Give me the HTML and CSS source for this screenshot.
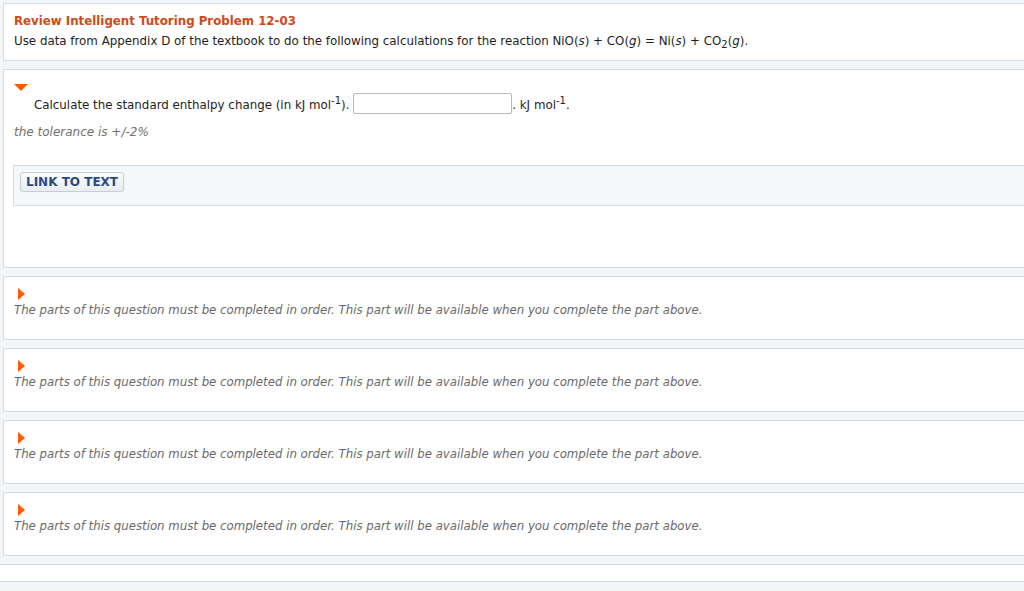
FILE: index.html
```html
<!DOCTYPE html>
<html>
<head>
<meta charset="utf-8">
<link rel="stylesheet" href="styles.css">
</head>
<body>
<div class="page">
  <div class="panel intro">
    <div class="title">Review Intelligent Tutoring Problem 12-03</div>
    <div class="lead">Use data from Appendix D of the textbook to do the following calculations for the reaction <span class="chem">NiO(<i>s</i>) + CO(<i>g</i>) = Ni(<i>s</i>) + CO<sub>2</sub>(<i>g</i>)</span>.</div>
  </div>

  <div class="panel part open">
    <div class="tri-down"></div>
    <div class="question">Calculate the standard enthalpy change (in kJ mol<sup>-1</sup>). <input class="answer" type="text"><span class="unit">. kJ mol<sup>-1</sup>.</span></div>
    <div class="tolerance">the tolerance is +/-2%</div>
    <div class="linkbox"><button class="linkbtn">LINK TO TEXT</button></div>
  </div>

  <div class="panel part closed">
    <div class="tri-right"></div>
    <div class="locked">The parts of this question must be completed in order. This part will be available when you complete the part above.</div>
  </div>
  <div class="panel part closed">
    <div class="tri-right"></div>
    <div class="locked">The parts of this question must be completed in order. This part will be available when you complete the part above.</div>
  </div>
  <div class="panel part closed">
    <div class="tri-right"></div>
    <div class="locked">The parts of this question must be completed in order. This part will be available when you complete the part above.</div>
  </div>
  <div class="panel part closed">
    <div class="tri-right"></div>
    <div class="locked">The parts of this question must be completed in order. This part will be available when you complete the part above.</div>
  </div>
</div>
<div class="footer"></div>
</body>
</html>
```

FILE: styles.css
```css
html, body {
  margin: 0;
  padding: 0;
  background: #f3f6f9;
  font-family: "DejaVu Sans", Verdana, sans-serif;
  font-size: 11.85px;
  color: #1e1e1e;
}
.page {
  padding: 3px 0 0 3px;
}
.panel {
  background: #fff;
  border: 1px solid #d3dae2;
  border-right: 0;
  margin-bottom: 8px;
  padding-left: 10px;
}
.intro {
  box-sizing: border-box;
  height: 58px;
  padding-top: 8px;
}
.title {
  color: #d04a18;
  font-weight: bold;
  font-size: 11.8px;
  line-height: 18px;
}
.lead {
  line-height: 22px;
}
sub, sup {
  font-size: 10px;
  line-height: 0;
}
sub { vertical-align: -3px; }
sup { vertical-align: 5px; }
.open {
  box-sizing: border-box;
  height: 199px;
  padding-top: 14px;
}
.tri-down {
  width: 0;
  height: 0;
  border-left: 7px solid transparent;
  border-right: 7px solid transparent;
  border-top: 7px solid #ff5a00;
}
.question {
  margin-top: 2px;
  padding-left: 20px;
  line-height: 24px;
  height: 24px;
}
.answer {
  box-sizing: border-box;
  width: 159px;
  height: 21px;
  border: 1px solid #b8b8b8;
  border-radius: 2px;
  padding: 0;
  margin: 0;
  vertical-align: 1px;
  background: #fff;
}
.tolerance {
  margin-top: 7px;
  font-style: italic;
  font-size: 12px;
  color: #707070;
  line-height: 16px;
}
.linkbox {
  margin-top: 25px;
  margin-left: -1px;
  background: #f5f8fb;
  border: 1px solid #d5dce4;
  border-right: 0;
  padding: 6px 0 0 6px;
  box-sizing: border-box;
  height: 41px;
}
.linkbtn {
  font-family: "DejaVu Sans", Verdana, sans-serif;
  font-size: 12px;
  font-weight: bold;
  color: #2a4a86;
  background: linear-gradient(#fbfcfd, #e9edf2);
  border: 1px solid #c6cdd6;
  border-radius: 3px;
  height: 20px;
  padding: 0 5px;
  line-height: 18px;
}
.closed {
  box-sizing: border-box;
  height: 64px;
  padding-top: 11px;
}
.tri-right {
  width: 0;
  height: 0;
  margin-left: 4px;
  border-top: 6px solid transparent;
  border-bottom: 6px solid transparent;
  border-left: 7px solid #ff5a00;
}
.locked {
  margin-top: 2px;
  font-style: italic;
  font-size: 11.75px;
  color: #6a6a6a;
  line-height: 16px;
}
.footer {
  background: #fff;
  border-top: 1px solid #d3dae2;
  border-bottom: 1px solid #d3dae2;
  height: 16px;
}
```
